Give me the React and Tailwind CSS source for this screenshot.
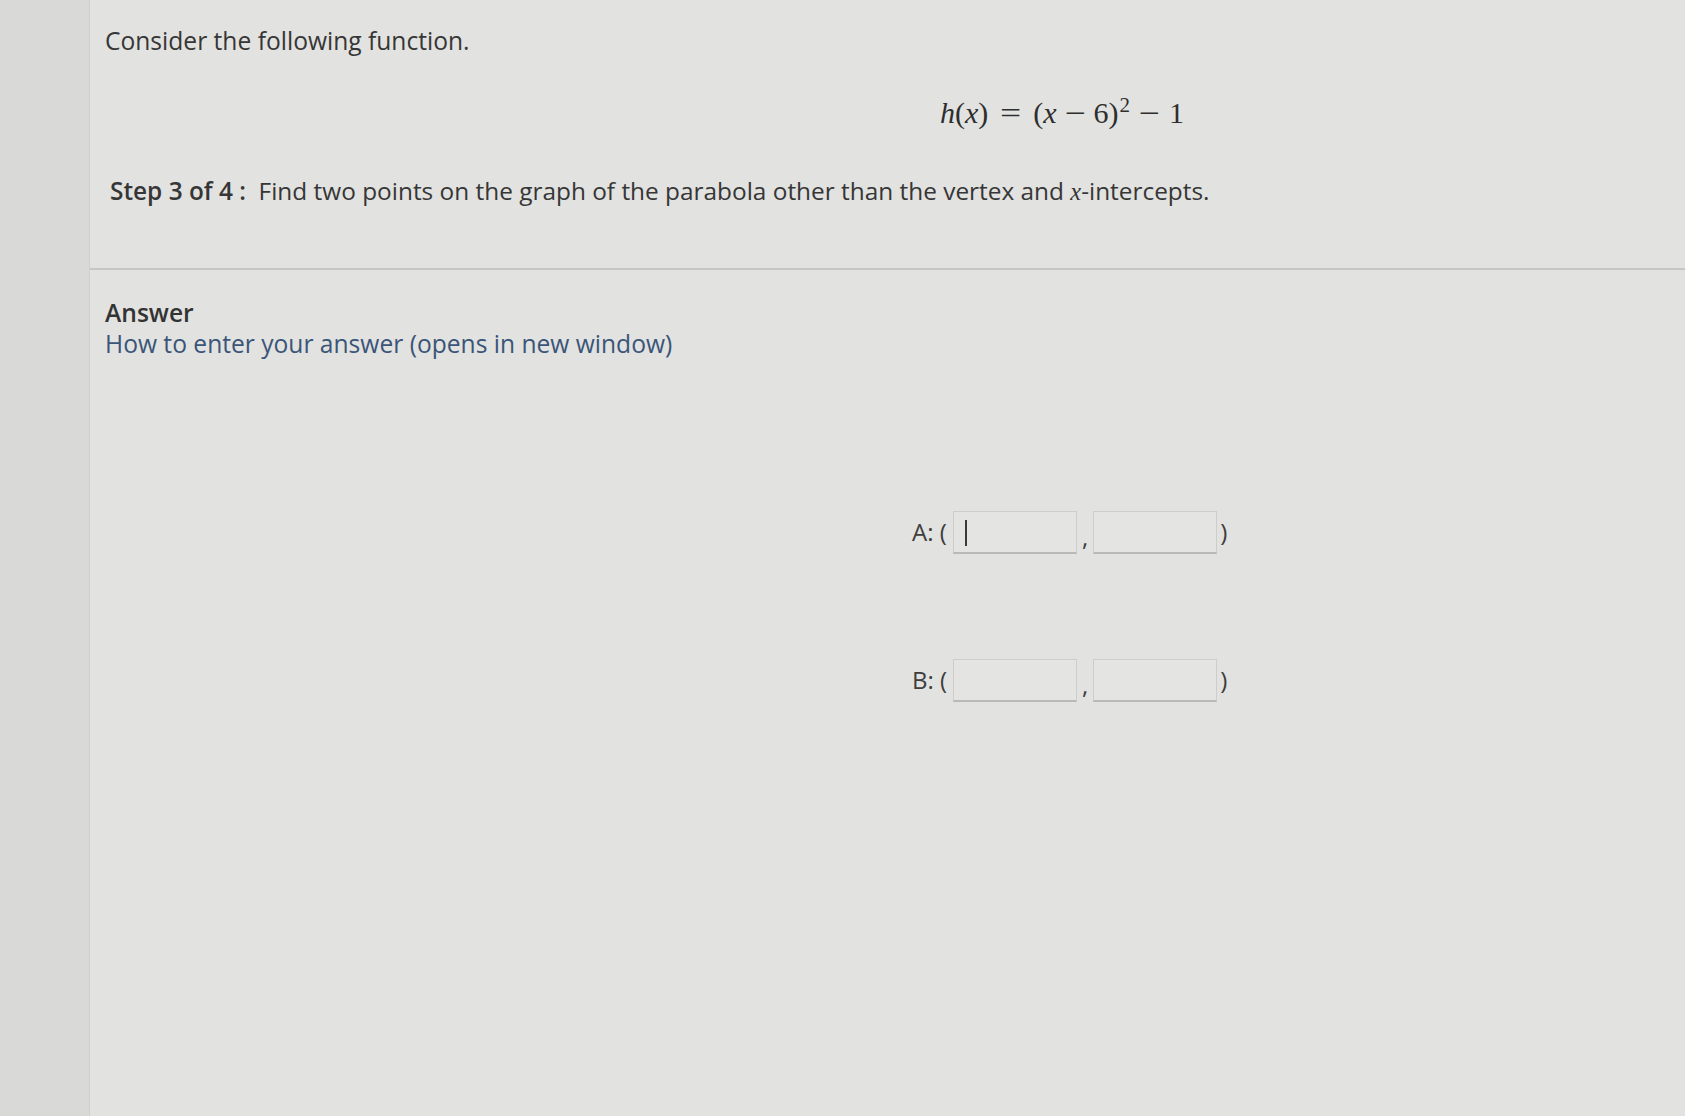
import React from 'react'

const sans = { fontFamily: '"Open Sans", "Noto Sans", sans-serif' }
const serif = { fontFamily: '"Liberation Serif", "DejaVu Serif", serif' }

function Box({ cursor }) {
  return (
    <div className="relative h-[43px] w-[124px] border border-[#cdcdcb] border-b-2 border-b-[#b9b9b7] bg-[#e4e4e2]">
      {cursor && <div className="absolute left-[11px] top-[8px] h-[26px] w-[2px] bg-[#3a3a3a]" />}
    </div>
  )
}

function PointRow({ label, cursor }) {
  return (
    <div className="flex items-center text-[24px] text-[#3d3d3d]">
      <span className="w-[41px]">{label}: (</span>
      <Box cursor={cursor} />
      <span className="mx-[5px] mt-[10px]">,</span>
      <Box />
      <span className="ml-[3px]">)</span>
    </div>
  )
}

export default function App() {
  return (
    <div className="flex min-h-[1116px] w-full overflow-hidden bg-[#e2e2e0]" style={sans}>
      <div className="w-[90px] shrink-0 border-r border-[#cfcfcd] bg-[#d9d9d7]" />
      <main className="flex-1">
        <div className="pl-[15px] pt-[24px]">
          <p className="text-[24.6px] leading-[34px] text-[#363636]">Consider the following function.</p>

          <div className="mt-[35px] flex items-baseline pl-[835px] text-[30px] leading-[40px] text-[#2e2e2e]" style={serif}>
            <span className="italic">h</span>
            <span>(</span>
            <span className="italic">x</span>
            <span>)</span>
            <span className="mx-[14px] scale-x-125">=</span>
            <span>(</span>
            <span className="italic">x</span>
            <span className="mx-[10px] scale-x-125">−</span>
            <span>6</span>
            <span>)</span>
            <span className="relative -top-[11px] ml-[1px] text-[21px]">2</span>
            <span className="mx-[11px] scale-x-125">−</span>
            <span>1</span>
          </div>

          <p className="ml-[5px] mt-[38px] text-[24.4px] leading-[34px] text-[#363636]">
            <span className="font-semibold">Step 3 of 4 :</span>&nbsp; Find two points on the graph of the parabola other
            than the vertex and <span className="italic" style={serif}>x</span>-intercepts.
          </p>
        </div>

        <div className="mt-[59px] h-[2px] bg-[#c6c6c4]" />

        <div className="pl-[15px] pt-[27px]">
          <p className="text-[24.6px] font-semibold leading-[32px] text-[#333333]">Answer</p>
          <p className="text-[24.6px] leading-[30px] text-[#3a5578]">How to enter your answer (opens in new window)</p>

          <div className="mt-[150px] flex flex-col gap-[102px] pl-[807px]">
            <PointRow label="A" cursor />
            <PointRow label="B" />
          </div>
        </div>
      </main>
    </div>
  )
}
